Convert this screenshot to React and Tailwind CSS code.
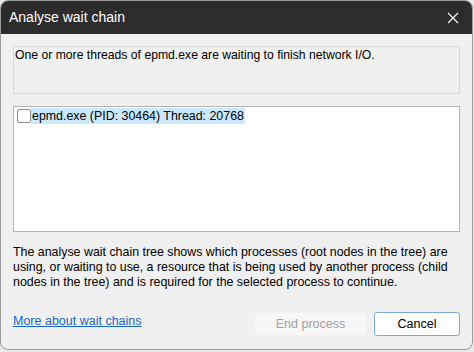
export default function App() {
  return (
    <div
      className="w-[474px] h-[352px] bg-[#e9e9e9] overflow-hidden"
      style={{ fontFamily: '"Liberation Sans", Arial, sans-serif' }}
    >
      <div className="w-[473px] h-[350px] flex flex-col rounded-[8px] overflow-hidden border border-[#9a9a9a] bg-[#f0f0f0]">
        <div className="h-[33px] shrink-0 bg-[#2c2c2c] flex items-center justify-between pl-[8px] pr-[12px]">
          <span className="text-[14px] text-white">Analyse wait chain</span>
          <svg width="12" height="12" viewBox="0 0 12 12" className="mr-[1px]">
            <path d="M1 1L11 11M11 1L1 11" stroke="#fff" strokeWidth="1.1" />
          </svg>
        </div>

        <div className="flex flex-col px-[12px] pt-[12px] text-[12.2px] text-black">
          <div className="h-[48px] border border-[#d9d9d9] px-[1px] pt-[1px] leading-[15px]">
            One or more threads of epmd.exe are waiting to finish network I/O.
          </div>

          <div className="mt-[12px] h-[126px] bg-white border border-[#b4b4b4] pl-[3px] pt-[1px]">
            <div className="flex items-center h-[16px]">
              <span className="w-[14px] h-[14px] rounded-[2px] border border-[#8a8a8a] bg-white shrink-0" />
              <span className="bg-[#cce8ff] h-[16px] leading-[16px] px-[1px] text-[12.4px]">
                epmd.exe (PID: 30464) Thread: 20768
              </span>
            </div>
          </div>

          <p className="mt-[13px] leading-[15px] text-[12.4px]">
            The analyse wait chain tree shows which processes (root nodes in the tree) are using, or waiting to use, a resource that is being used by another process (child nodes in the tree) and is required for the selected process to continue.
          </p>

          <div className="mt-[22px] flex items-start justify-between">
            <a className="text-[12.5px] text-[#1a66c8] underline">More about wait chains</a>
            <div className="flex gap-[8px]">
              <button className="w-[111px] h-[22px] bg-[#f6f6f6] text-[#a2a2a2] text-[12.5px] rounded-[3px] mt-[1px]">
                End process
              </button>
              <button className="w-[86px] h-[24px] bg-[#fdfdfd] border border-[#7ea8d6] text-black text-[12.5px] rounded-[3px]">
                Cancel
              </button>
            </div>
          </div>
        </div>
      </div>
    </div>
  );
}
